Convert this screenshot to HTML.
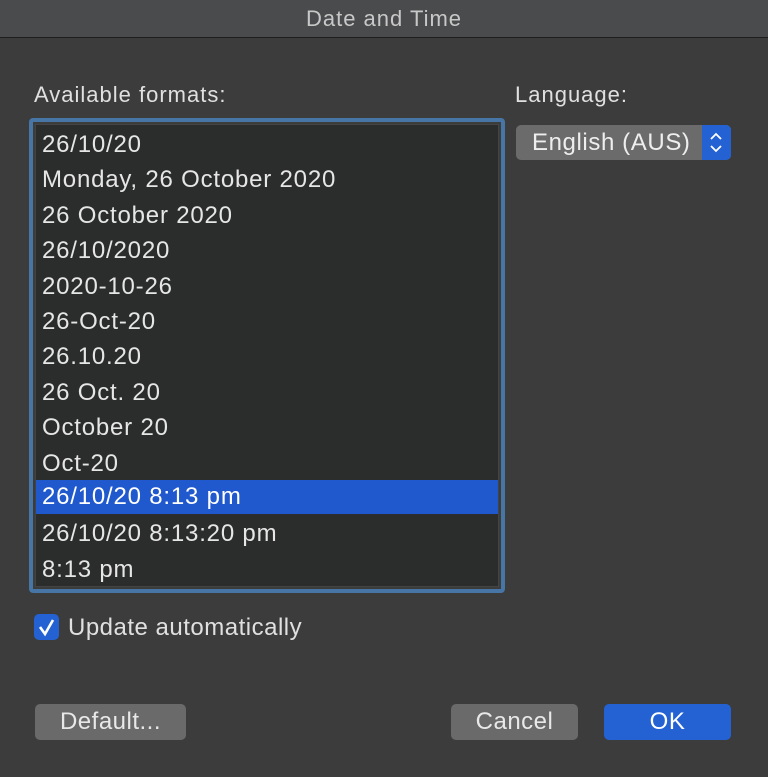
<!DOCTYPE html>
<html><head><style>
*{margin:0;padding:0;box-sizing:border-box}
body{width:768px;height:777px;background:#3b3c3b;font-family:"Liberation Sans",sans-serif;color:#e2e2e2;position:relative;overflow:hidden}
.title{position:absolute;left:0;top:0;width:768px;height:38px;background:#4a4b4c;border-bottom:1px solid #1e1e1e;text-align:center;line-height:38px;font-size:22px;letter-spacing:1px;color:#c8c8c8}
.lbl{position:absolute;font-size:22px;letter-spacing:1px;color:#e0e0e0}
.ring{position:absolute;left:29px;top:118px;width:476px;height:475px;border:4px solid #4675a6;border-radius:4px}
.list{position:absolute;left:35px;top:124px;width:464px;height:463px;background:#2b2c2c;border:1px solid #444}
.row{position:absolute;left:0;width:462px;height:34px;line-height:34px;padding-left:6px;font-size:24px;letter-spacing:0.8px;color:#e6e6e6}
.sel{background:#2059cd;color:#fff}
.pop{position:absolute;left:516px;top:125px;width:215px;height:35px;background:#6b6b6b;border-radius:5px;overflow:hidden;font-size:24px;letter-spacing:0.6px;line-height:35px;padding-left:16px;color:#eee}
.pop .arr{position:absolute;right:0;top:0;width:29px;height:35px;background:#2462d4}
.cb{position:absolute;left:34px;top:614px;width:25px;height:26px;background:#2462d4;border-radius:5px}
.btn{position:absolute;top:704px;height:36px;border-radius:5px;background:#6a6a6a;font-size:24px;letter-spacing:0.5px;line-height:36px;text-align:center;color:#e8e8e8}
</style></head><body>
<div class="title">Date and Time</div>
<div class="lbl" style="left:34px;top:82px">Available formats:</div>
<div class="lbl" style="left:515px;top:82px">Language:</div>
<div class="ring"></div>
<div class="list">
<div class="row" style="top:3px">26/10/20</div>
<div class="row" style="top:38px">Monday, 26 October 2020</div>
<div class="row" style="top:74px">26 October 2020</div>
<div class="row" style="top:109px">26/10/2020</div>
<div class="row" style="top:145px">2020-10-26</div>
<div class="row" style="top:180px">26-Oct-20</div>
<div class="row" style="top:215px">26.10.20</div>
<div class="row" style="top:251px">26 Oct. 20</div>
<div class="row" style="top:286px">October 20</div>
<div class="row" style="top:322px">Oct-20</div>
<div class="row sel" style="top:355px">26/10/20 8:13 pm</div>
<div class="row" style="top:392px">26/10/20 8:13:20 pm</div>
<div class="row" style="top:428px">8:13 pm</div>
</div>
<div class="pop">English (AUS)<div class="arr"><svg width="29" height="35" viewBox="0 0 29 35"><path d="M9 14l5-5 5 5M9 21l5 5 5-5" stroke="#fff" stroke-width="1.8" fill="none"/></svg></div></div>
<div class="cb"><svg width="25" height="26" viewBox="0 0 25 26"><path d="M6 13l5 7 8-14" stroke="#fff" stroke-width="2.6" fill="none"/></svg></div>
<div class="lbl" style="left:68px;top:614px;font-size:24px;letter-spacing:0.5px">Update automatically</div>
<div class="btn" style="left:35px;width:151px">Default...</div>
<div class="btn" style="left:451px;width:127px">Cancel</div>
<div class="btn" style="left:604px;width:127px;background:#2462d4;color:#fff">OK</div>
</body></html>
